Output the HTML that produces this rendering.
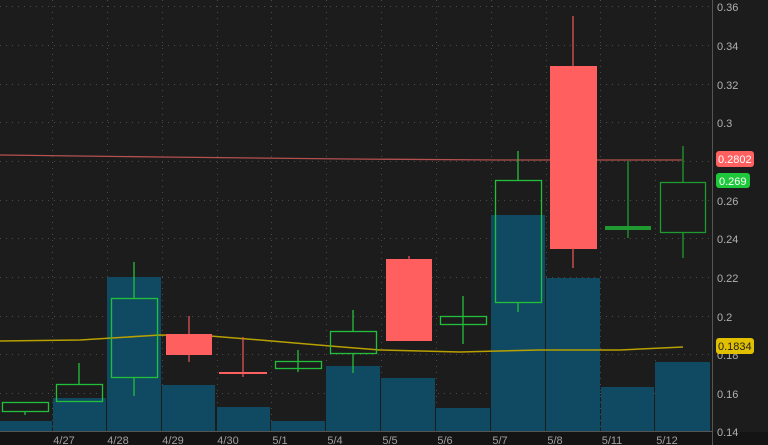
<!DOCTYPE html>
<html><head><style>
html,body{margin:0;padding:0;background:#1c1c1c;}
svg{display:block;}
text{font-family:"Liberation Sans",sans-serif;}
</style></head><body>
<svg width="768" height="445" xmlns="http://www.w3.org/2000/svg">
<rect width="768" height="445" fill="#1c1c1c"/>
<rect x="0" y="432" width="768" height="13" fill="#141414"/>
<g stroke="#4a4a4a" stroke-width="1" stroke-dasharray="1,5">
<line x1="0" y1="6.5" x2="712" y2="6.5"/><line x1="0" y1="45.5" x2="712" y2="45.5"/>
<line x1="0" y1="84.5" x2="712" y2="84.5"/><line x1="0" y1="122.5" x2="712" y2="122.5"/>
<line x1="0" y1="161.5" x2="712" y2="161.5"/><line x1="0" y1="200.5" x2="712" y2="200.5"/>
<line x1="0" y1="238.5" x2="712" y2="238.5"/><line x1="0" y1="277.5" x2="712" y2="277.5"/>
<line x1="0" y1="316.5" x2="712" y2="316.5"/><line x1="0" y1="354.5" x2="712" y2="354.5"/>
<line x1="0" y1="393.5" x2="712" y2="393.5"/>
<line x1="52.5" y1="0" x2="52.5" y2="431"/><line x1="107.5" y1="0" x2="107.5" y2="431"/>
<line x1="162.5" y1="0" x2="162.5" y2="431"/><line x1="217.5" y1="0" x2="217.5" y2="431"/>
<line x1="271.5" y1="0" x2="271.5" y2="431"/><line x1="326.5" y1="0" x2="326.5" y2="431"/>
<line x1="381.5" y1="0" x2="381.5" y2="431"/><line x1="436.5" y1="0" x2="436.5" y2="431"/>
<line x1="491.5" y1="0" x2="491.5" y2="431"/><line x1="546.5" y1="0" x2="546.5" y2="431"/>
<line x1="600.5" y1="0" x2="600.5" y2="431"/><line x1="655.5" y1="0" x2="655.5" y2="431"/>
</g>
<g fill="#0f4a62">
<rect x="0" y="421" width="52" height="10"/><rect x="53" y="398" width="53" height="33"/>
<rect x="107" y="277" width="54" height="154"/><rect x="162" y="385" width="53" height="46"/>
<rect x="217" y="407" width="53" height="24"/><rect x="271" y="421" width="54" height="10"/>
<rect x="326" y="366" width="54" height="65"/><rect x="381" y="378" width="54" height="53"/>
<rect x="436" y="408" width="54" height="23"/><rect x="491" y="215" width="54" height="216"/>
<rect x="546" y="278" width="54" height="153"/><rect x="601" y="387" width="53" height="44"/>
<rect x="655" y="362" width="55" height="69"/>
</g>
<line x1="0" y1="431.5" x2="712" y2="431.5" stroke="#555"/>
<line x1="712.5" y1="0" x2="712.5" y2="445" stroke="#555"/>
<polyline points="0,155 160,157 350,159 500,160 682,160" fill="none" stroke="#b55050" stroke-width="1.3"/>
<polyline points="0,341 80,340 160,335 210,336 260,340 330,346 380,350 460,352 540,350 620,350 683,347" fill="none" stroke="#b8a000" stroke-width="1.5"/>
<g stroke="#22c03a" stroke-width="1.3" fill="none">
<line x1="25" y1="412" x2="25" y2="415"/><rect x="2.5" y="402.5" width="46" height="9"/>
<line x1="79" y1="363" x2="79" y2="384"/><rect x="56.5" y="384.5" width="46" height="17"/>
<line x1="134" y1="262" x2="134" y2="298"/><line x1="134" y1="377" x2="134" y2="396"/><rect x="111.5" y="298.5" width="46" height="79"/>
<line x1="298" y1="350" x2="298" y2="372"/><rect x="275.5" y="361.5" width="46" height="7"/>
<line x1="353" y1="310" x2="353" y2="331"/><line x1="353" y1="353" x2="353" y2="373"/><rect x="330.5" y="331.5" width="46" height="22"/>
<line x1="463" y1="296" x2="463" y2="344"/><rect x="440.5" y="316.5" width="46" height="8"/>
<line x1="518" y1="151" x2="518" y2="180"/><line x1="518" y1="303" x2="518" y2="312"/><rect x="495.5" y="180.5" width="46" height="122"/>
</g>
<g stroke="#1e9a30" stroke-width="1.3" fill="none">
<line x1="628" y1="161" x2="628" y2="238"/>
<line x1="683" y1="146" x2="683" y2="182"/><line x1="683" y1="232" x2="683" y2="258"/><rect x="660.5" y="182.5" width="45" height="50"/>
</g>
<rect x="605" y="226" width="46" height="4" fill="#1e9a30"/>
<g stroke="#e05555" stroke-width="1.3">
<line x1="189" y1="316" x2="189" y2="362"/><line x1="243" y1="337" x2="243" y2="377"/>
<line x1="409" y1="256" x2="409" y2="260"/><line x1="573" y1="16" x2="573" y2="268"/>
</g>
<g fill="#ff5f5f">
<rect x="166" y="334" width="46" height="21"/><rect x="219" y="372" width="48" height="2"/>
<rect x="386" y="259" width="46" height="82"/><rect x="550" y="66" width="47" height="183"/>
</g>
<g fill="#b0b0b0" font-size="11">
<text x="717" y="11">0.36</text><text x="717" y="50">0.34</text><text x="717" y="89">0.32</text>
<text x="717" y="127">0.3</text><text x="717" y="205">0.26</text><text x="717" y="243">0.24</text>
<text x="717" y="282">0.22</text><text x="717" y="321">0.2</text><text x="717" y="359">0.18</text>
<text x="717" y="398">0.16</text><text x="717" y="436">0.14</text>
</g>
<rect x="716" y="151" width="38" height="16" rx="3" fill="#ff6060"/>
<text x="718" y="163" font-size="11" fill="#fff">0.2802</text>
<rect x="716" y="173" width="34" height="15" rx="3" fill="#1ec83a"/>
<text x="719" y="185" font-size="11" fill="#fff">0.269</text>
<rect x="716" y="338" width="38" height="16" rx="3" fill="#e0c000"/>
<text x="718" y="350" font-size="11" fill="#222">0.1834</text>
<g fill="#a0a0a0" font-size="11" text-anchor="middle">
<text x="64" y="444">4/27</text><text x="118" y="444">4/28</text><text x="173" y="444">4/29</text>
<text x="228" y="444">4/30</text><text x="280" y="444">5/1</text><text x="335" y="444">5/4</text>
<text x="390" y="444">5/5</text><text x="445" y="444">5/6</text><text x="500" y="444">5/7</text>
<text x="555" y="444">5/8</text><text x="612" y="444">5/11</text><text x="667" y="444">5/12</text>
</g>
</svg>
</body></html>
